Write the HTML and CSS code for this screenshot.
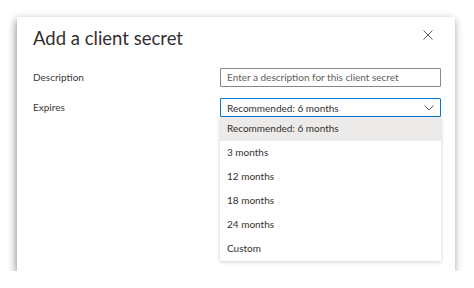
FILE: index.html
```html
<!DOCTYPE html>
<html lang="en">
<head>
	<meta charset="UTF-8">
	<title>Add a client secret</title>
	<link rel="stylesheet" href="styles.css">
</head>
<body>
	<section class="dialog">
		<header class="dialog-header">
			<h1 class="dialog-title">Add a client secret</h1>
			<button class="close" aria-label="Close">
				<svg width="10" height="10" viewBox="0 0 10 10">
					<path d="M0.5 0.5 L9.5 9.5 M9.5 0.5 L0.5 9.5" stroke="#605e5c" stroke-width="1" fill="none"/>
				</svg>
			</button>
		</header>
		<div class="form">
			<label class="field-label">Description</label>
			<div class="input">Enter a description for this client secret</div>
			<label class="field-label">Expires</label>
			<div class="select-wrap">
				<div class="select">
					<span>Recommended: 6 months</span>
					<svg width="10" height="6" viewBox="0 0 10 6">
						<path d="M0.5 0.5 L5 5 L9.5 0.5" stroke="#605e5c" stroke-width="1" fill="none"/>
					</svg>
				</div>
				<ul class="options">
					<li class="option selected">Recommended: 6 months</li>
					<li class="option">3 months</li>
					<li class="option">12 months</li>
					<li class="option">18 months</li>
					<li class="option">24 months</li>
					<li class="option">Custom</li>
				</ul>
			</div>
		</div>
	</section>
</body>
</html>
```

FILE: styles.css
```css
html{
	box-sizing: border-box;
	font-family: Lato, "Open Sans", sans-serif;
	font-size: 10px;
	color: #323130;
}
*,
*:before,
*:after{
	box-sizing: inherit;
}

body{
	margin: 0;
	background-color: #fff;
}

.dialog{
	margin: 17px 0 0 17px;
	width: 438px;
	height: 254px;
	padding: 0 14px 0 16px;
	background-color: #fff;
	box-shadow: -1px 3px 8px rgba(0,0,0,.45);
}
.dialog-header{
	display: flex;
	justify-content: space-between;
	align-items: flex-start;
	padding-top: 8px;
}
.dialog-title{
	margin: 0;
	font-size: 18.5px;
	font-weight: 400;
	line-height: 26px;
	color: #323130;
}
.close{
	margin: 5px 8px 0 0;
	padding: 0;
	border: none;
	background: none;
	line-height: 0;
}

.form{
	display: grid;
	grid-template-columns: 187px 221px;
	row-gap: 11px;
	align-items: center;
	margin-top: 17px;
}
.field-label{
	line-height: 17px;
	color: #3b3a39;
}
.input,
.select{
	height: 19px;
	padding: 0 6px;
	border: 1px solid #8a8886;
	border-radius: 1px;
	line-height: 16px;
	color: #605e5c;
}
.select{
	display: flex;
	justify-content: space-between;
	align-items: center;
	border-color: #0078d4;
	color: #323130;
	padding-right: 6px;
}

.select-wrap{
	position: relative;
}
.options{
	position: absolute;
	top: 100%;
	left: 0;
	width: 100%;
	margin: 0;
	padding: 0;
	list-style: none;
	background-color: #fff;
	box-shadow: 0 1px 4px rgba(0,0,0,.2);
}
.option{
	height: 24px;
	line-height: 22px;
	padding: 0 7px;
}
.option.selected{
	background-color: #edebe9;
}
```
